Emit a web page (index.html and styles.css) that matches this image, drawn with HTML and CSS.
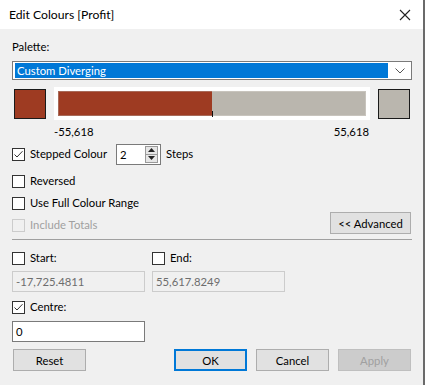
FILE: index.html
```html
<!DOCTYPE html>
<html>
<head>
<meta charset="utf-8">
<link rel="stylesheet" href="styles.css">
</head>
<body>
<div class="dialog">
  <div class="titlebar">
    <span class="title">Edit Colours [Profit]</span>
    <svg class="close" width="12" height="12" viewBox="0 0 12 12"><path d="M1 1 L11 11 M11 1 L1 11" stroke="#222" stroke-width="1.1" fill="none"/></svg>
  </div>
  <div class="content">
    <div class="label palette-label">Palette:</div>
    <div class="select">
      <div class="select-value">Custom Diverging</div>
      <svg class="chevron" width="10" height="6" viewBox="0 0 10 6"><path d="M0.5 0.5 L5 5 L9.5 0.5" stroke="#555" stroke-width="1" fill="none"/></svg>
    </div>
    <div class="ramp-row">
      <div class="swatch swatch-red"></div>
      <div class="ramp-box">
        <div class="ramp">
          <div class="ramp-red"></div>
          <div class="ramp-grey"></div>
          <div class="ramp-tick"></div>
        </div>
      </div>
      <div class="swatch swatch-grey"></div>
    </div>
    <div class="range-labels">
      <span>-55,618</span>
      <span>55,618</span>
    </div>
    <div class="stepped-row">
      <span class="check checked"><svg width="11" height="11" viewBox="0 0 11 11"><path d="M1.5 5.5 L4 8 L9.5 2.2" stroke="#333" stroke-width="1" fill="none"/></svg></span>
      <span class="cb-label">Stepped Colour</span>
      <div class="spin">
        <span class="spin-value">2</span>
        <div class="spin-btns">
          <div class="spin-btn"><svg width="7" height="4" viewBox="0 0 7 4"><path d="M0 4 L3.5 0 L7 4 Z" fill="#222"/></svg></div>
          <div class="spin-btn"><svg width="7" height="4" viewBox="0 0 7 4"><path d="M0 0 L3.5 4 L7 0 Z" fill="#222"/></svg></div>
        </div>
      </div>
      <span class="steps-label">Steps</span>
    </div>
    <div class="cb-row reversed-row">
      <span class="check"></span>
      <span class="cb-label">Reversed</span>
    </div>
    <div class="cb-row full-row">
      <span class="check"></span>
      <span class="cb-label">Use Full Colour Range</span>
    </div>
    <div class="totals-row">
      <div class="cb-row disabled">
        <span class="check"></span>
        <span class="cb-label">Include Totals</span>
      </div>
      <button class="btn advanced">&lt;&lt; Advanced</button>
    </div>
    <div class="separator"></div>
    <div class="startend-row">
      <div class="field">
        <div class="cb-row">
          <span class="check"></span>
          <span class="cb-label">Start:</span>
        </div>
        <div class="input disabled-input">-17,725.4811</div>
      </div>
      <div class="field">
        <div class="cb-row">
          <span class="check"></span>
          <span class="cb-label">End:</span>
        </div>
        <div class="input disabled-input">55,617.8249</div>
      </div>
    </div>
    <div class="cb-row centre-row">
      <span class="check checked"><svg width="11" height="11" viewBox="0 0 11 11"><path d="M1.5 5.5 L4 8 L9.5 2.2" stroke="#333" stroke-width="1" fill="none"/></svg></span>
      <span class="cb-label">Centre:</span>
    </div>
    <div class="input centre-input">0</div>
    <div class="button-row">
      <button class="btn">Reset</button>
      <div class="right-btns">
        <button class="btn default">OK</button>
        <button class="btn">Cancel</button>
        <button class="btn disabled-btn">Apply</button>
      </div>
    </div>
  </div>
</div>
</body>
</html>
```

FILE: styles.css
```css
html, body {
  margin: 0;
  padding: 0;
  background: #f0f0f0;
}
body {
  font-family: "Lato", "Noto Sans", "Liberation Sans", sans-serif;
  font-size: 11.3px;
  color: #000;
}
.dialog {
  width: 423px;
  height: 385px;
  background: #f0f0f0;
  border-right: 2px solid #6a6a6a;
  overflow: hidden;
}
.titlebar {
  height: 29px;
  background: #fff;
  display: flex;
  align-items: center;
  justify-content: space-between;
  padding: 0 12px 0 9px;
}
.title {
  font-size: 12.2px;
  color: #000;
}
.close {
  display: block;
}
.content {
  padding: 10px 11px 0 12px;
}
.label, .cb-label, .steps-label, .range-labels {
  line-height: 16px;
}
.palette-label {
  height: 16px;
}
.select {
  margin-top: 6px;
  height: 19px;
  box-sizing: border-box;
  border: 1px solid #7a7a7a;
  background: #fff;
  display: flex;
  align-items: center;
  padding: 0 4px 0 2px;
}
.select-value {
  flex: 1;
  height: 15px;
  line-height: 15px;
  background: #0078d7;
  color: #fff;
  padding-left: 2px;
  margin-right: 7px;
}
.chevron {
  display: block;
  margin-right: 2px;
}
.ramp-row {
  margin-top: 7px;
  display: flex;
  align-items: center;
  height: 33px;
}
.swatch {
  width: 32px;
  height: 30px;
  box-sizing: border-box;
  border: 1px solid #1a1a1a;
}
.swatch-red {
  margin-left: 2px;
  background: #9e3b22;
}
.swatch-grey {
  background: #bab6ae;
}
.ramp-box {
  margin: 0 8px 0 8px;
  width: 316px;
  height: 33px;
  box-sizing: border-box;
  background: #fff;
  padding: 4px;
}
.ramp {
  position: relative;
  display: flex;
  height: 25px;
}
.ramp-red {
  width: 154px;
  background: #9e3b22;
  box-sizing: border-box;
  border: 1px solid #a86a58;
  border-right: none;
}
.ramp-grey {
  flex: 1;
  background: #bab6ae;
  box-sizing: border-box;
  border: 1px solid #c8c4bd;
  border-left: none;
}
.ramp-tick {
  position: absolute;
  left: 154px;
  top: 20px;
  width: 1px;
  height: 6px;
  background: #111;
}
.range-labels {
  margin-top: 4px;
  display: flex;
  justify-content: space-between;
  padding: 0 43px 0 42px;
}
.stepped-row {
  margin-top: 4px;
  display: flex;
  align-items: center;
  height: 20px;
}
.check {
  display: inline-flex;
  align-items: center;
  justify-content: center;
  width: 13px;
  height: 13px;
  box-sizing: border-box;
  border: 1px solid #333;
  background: #fff;
  flex: none;
}
.check svg {
  display: block;
}
.cb-label {
  margin-left: 5px;
}
.spin {
  margin-left: 9px;
  width: 45px;
  height: 21px;
  box-sizing: border-box;
  border: 1px solid #7a7a7a;
  background: #fff;
  display: flex;
  align-items: center;
  padding: 1px 2px 1px 3px;
}
.spin-value {
  flex: 1;
}
.spin-btns {
  width: 13px;
  height: 17px;
  box-sizing: border-box;
  border: 1px solid #9a9a9a;
  display: flex;
  flex-direction: column;
  background: #e6e6e6;
}
.spin-btn {
  flex: 1;
  display: flex;
  align-items: center;
  justify-content: center;
}
.spin-btn + .spin-btn {
  border-top: 1px solid #9a9a9a;
}
.steps-label {
  margin-left: 5px;
}
.cb-row {
  display: flex;
  align-items: center;
  height: 16px;
}
.reversed-row {
  margin-top: 9px;
}
.full-row {
  margin-top: 6px;
}
.totals-row {
  margin-top: 1px;
  display: flex;
  justify-content: space-between;
  align-items: flex-start;
  height: 22px;
}
.totals-row .cb-row {
  margin-top: 5px;
}
.disabled .check {
  border-color: #ccc;
  background: #f0f0f0;
}
.disabled .cb-label {
  color: #a0a0a0;
}
.btn {
  font-family: inherit;
  font-size: 11.3px;
  color: #000;
  background: #e1e1e1;
  border: 1px solid #adadad;
  height: 22px;
  width: 73px;
  padding: 0;
  margin: 0;
  box-sizing: border-box;
}
.advanced {
  width: 81px;
  height: 22px;
  margin-right: 1px;
}
.separator {
  margin-top: 5px;
  height: 1px;
  background: #a0a0a0;
}
.startend-row {
  margin-top: 10px;
  display: flex;
  gap: 7px;
}
.field {
  display: flex;
  flex-direction: column;
}
.field .cb-row {
  height: 16px;
}
.input {
  margin-top: 5px;
  width: 133px;
  height: 21px;
  box-sizing: border-box;
  border: 1px solid #7a7a7a;
  background: #fff;
  padding-left: 3px;
  line-height: 19px;
}
.disabled-input {
  margin-top: 5px;
  border-color: #cccccc;
  background: #f0f0f0;
  color: #6d6d6d;
}
.centre-row {
  margin-top: 7px;
}
.centre-input {
  margin-top: 6px;
  width: 133px;
}
.button-row {
  margin-top: 7px;
  display: flex;
  justify-content: space-between;
  padding-left: 1px;
  padding-right: 1px;
}
.right-btns {
  display: flex;
  gap: 9px;
}
.default {
  border: 2px solid #0078d7;
}
.disabled-btn {
  background: #cccccc;
  border-color: #bfbfbf;
  color: #a0a0a0;
}
```
